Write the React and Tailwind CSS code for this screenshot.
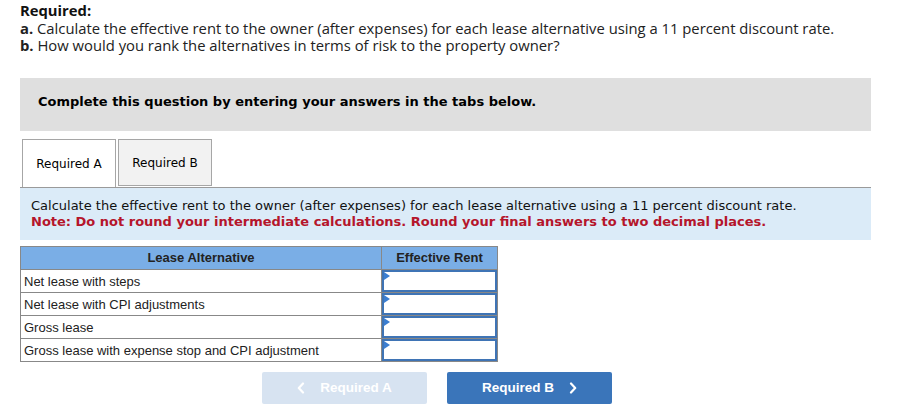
import React from "react";

const rows = [
  "Net lease with steps",
  "Net lease with CPI adjustments",
  "Gross lease",
  "Gross lease with expense stop and CPI adjustment",
];

function Marker() {
  return (
    <svg className="absolute left-0 top-0" width="6" height="8" viewBox="0 0 6 8">
      <polygon points="0,0 6,4 0,8" fill="#3b7ed1" />
    </svg>
  );
}

function Chevron({ dir }) {
  return (
    <svg width="8" height="12" viewBox="0 0 8 12">
      <polyline
        points={dir === "left" ? "6,1.5 1.8,6 6,10.5" : "2,1.5 6.2,6 2,10.5"}
        fill="none"
        stroke="white"
        strokeWidth="2.2"
        strokeLinecap="round"
        strokeLinejoin="round"
      />
    </svg>
  );
}

export default function App() {
  return (
    <div className="w-[911px] h-[413px] bg-white pl-5 pt-[2px] relative overflow-hidden">
      <div className="font-['Open_Sans',sans-serif] text-[14.8px] leading-[17.7px] text-[#222]">
        <div className="font-bold text-[#111]">Required:</div>
        <div>
          <span className="font-bold">a.</span> Calculate the effective rent to the owner (after expenses) for each lease alternative using a 11 percent discount rate.
        </div>
        <div>
          <span className="font-bold">b.</span> How would you rank the alternatives in terms of risk to the property owner?
        </div>
      </div>

      <div className="mt-[23px] w-[851px] h-[53px] bg-[#dfdfdf] flex items-center pb-[5px] pl-[18px] font-['DejaVu_Sans',Verdana,sans-serif] font-bold text-[13px] text-black">
        Complete this question by entering your answers in the tabs below.
      </div>

      <div className="mt-[8px] w-[851px]">
        <div className="flex gap-[2px] pl-[2px] font-['DejaVu_Sans',Verdana,sans-serif] text-[12px] text-black">
          <div className="w-[94px] h-[48px] flex items-center justify-center border border-b-0 border-[#a6a6a6] bg-white">Required A</div>
          <div className="w-[94px] h-[47px] flex items-center justify-center border border-[#a6a6a6] bg-[#f2f2f2]">Required B</div>
        </div>
        <div className="h-[53px] bg-[#dbebf8] border-t border-[#9a9a9a] pl-[11px] pt-[10px] font-['DejaVu_Sans',Verdana,sans-serif] text-[13px] leading-[16px]">
          <div className="text-[#111]">Calculate the effective rent to the owner (after expenses) for each lease alternative using a 11 percent discount rate.</div>
          <div className="font-bold text-[#b5152b]">Note: Do not round your intermediate calculations. Round your final answers to two decimal places.</div>
        </div>
      </div>

      <table className="mt-[6px] border-collapse font-['Liberation_Sans',Arial,sans-serif] text-[13px] text-[#222]">
        <thead>
          <tr className="h-[23px] bg-[#7aaee6]">
            <th className="w-[361px] border border-[#888] font-bold text-center text-[#222]">Lease Alternative</th>
            <th className="w-[116px] border border-[#888] font-bold text-center text-[#222]">Effective Rent</th>
          </tr>
        </thead>
        <tbody>
          {rows.map((r) => (
            <tr key={r} className="h-[23px]">
              <td className="border border-[#888] pl-[3px] leading-[21px] align-middle">{r}</td>
              <td className="border border-[#888] p-0">
                <div className="relative h-[22px] border-2 border-[#3f74b5] bg-white">
                  <Marker />
                </div>
              </td>
            </tr>
          ))}
        </tbody>
      </table>

      <div className="mt-[10px] flex gap-[20px] pl-[242px] font-['Liberation_Sans',Arial,sans-serif] font-bold text-[13.5px] text-white">
        <div className="w-[165px] h-[32px] rounded-[2px] bg-[#d7e3f1] flex items-center justify-center gap-[15px]">
          <Chevron dir="left" />
          <span>Required A</span>
        </div>
        <div className="w-[165px] h-[32px] rounded-[2px] bg-[#3a75ba] flex items-center justify-center gap-[15px]">
          <span>Required B</span>
          <Chevron dir="right" />
        </div>
      </div>
    </div>
  );
}
